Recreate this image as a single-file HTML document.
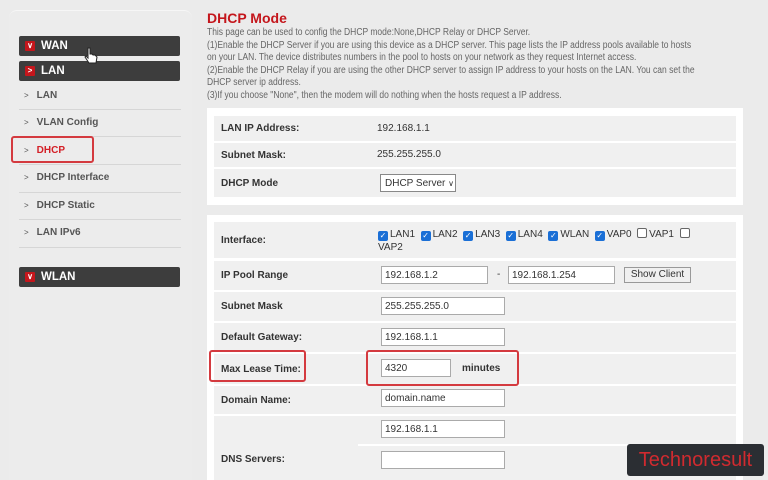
<!DOCTYPE html>
<html><head><style>
*{margin:0;padding:0;box-sizing:border-box}
body{width:768px;height:480px;overflow:hidden;background:#ebebeb;font-family:"Liberation Sans",Arial,sans-serif;position:relative;color:#333}
.a{position:absolute}
.bar{position:absolute;left:19px;width:161px;height:20px;background:#3d3d3d;border-radius:2px;color:#fff;font-weight:bold;font-size:11.5px;line-height:20px;padding-left:22px}
.bar i{position:absolute;left:6px;top:5px;width:10px;height:10px;background:#c4161c;border-radius:1px;color:#fff;font-style:normal;font-size:8px;line-height:10px;text-align:center}
.it{position:absolute;left:24px;font-size:10px;color:#555;font-weight:bold}
.it b{font-weight:normal;margin-right:8px;font-size:8px}
.hr{position:absolute;left:19px;width:162px;height:1px;background:#d6d6d6}
.desc{position:absolute;left:207px;top:27px;width:640px;font-size:10px;line-height:12.6px;color:#666;white-space:nowrap;transform:scaleX(0.85);transform-origin:0 0}
.panel{position:absolute;left:207px;width:536px;background:#fff}
.row{position:absolute;left:7px;width:522px;background:#f0f0f0}
.lab{position:absolute;left:0;top:0;bottom:0;width:142px;font-size:10px;font-weight:bold;color:#333;padding-left:7px;display:flex;align-items:center}
.val{position:absolute;left:144px;right:0;top:0;bottom:0;font-size:10px;color:#333}
.inp{position:absolute;height:18px;background:#fff;border:1px solid #aaa;font-size:10px;line-height:17px;padding-left:3px;color:#333;white-space:nowrap}
.cb{display:inline-block;width:10px;height:10px;border-radius:2px;background:#1a6fd6;vertical-align:-1px;margin-right:2px;color:#fff;font-size:8px;line-height:10px;text-align:center}
.cb.u{background:#fff;border:1px solid #666}
.red{position:absolute;border:2.5px solid #d43a3f;border-radius:3px}
</style></head><body>
<div class="a" style="left:9px;top:10px;width:183px;height:470px;background:#ececec;border-radius:8px 8px 0 0;border-top:1px solid #f6f6f6"></div>
<div class="bar" style="top:36px"><i>&#x2228;</i>WAN</div>
<div class="bar" style="top:61px"><i>&gt;</i>LAN</div>
<div class="it" style="top:90px"><b>&gt;</b>LAN</div><div class="hr" style="top:109px"></div>
<div class="it" style="top:117px"><b>&gt;</b>VLAN Config</div><div class="hr" style="top:136px"></div>
<div class="it" style="top:145px;color:#d42027"><b style="color:#555">&gt;</b>DHCP</div><div class="hr" style="top:164px"></div>
<div class="it" style="top:172px"><b>&gt;</b>DHCP Interface</div><div class="hr" style="top:192px"></div>
<div class="it" style="top:200px"><b>&gt;</b>DHCP Static</div><div class="hr" style="top:219px"></div>
<div class="it" style="top:227px"><b>&gt;</b>LAN IPv6</div><div class="hr" style="top:247px"></div>
<div class="bar" style="top:267px"><i>&#x2228;</i>WLAN</div>
<div class="red" style="left:11px;top:136px;width:83px;height:27px"></div>
<svg class="a" style="left:84px;top:47px" width="14" height="18" viewBox="0 0 14 18"><path d="M4 1v10l-2-2-1 1 4 6h7l1-6-2-2-2 0-1-1-2 0V1z" fill="#fff" stroke="#222" stroke-width="1"/></svg>

<div class="a" style="left:207px;top:10px;font-size:14px;font-weight:bold;color:#c4161c">DHCP Mode</div>
<div class="desc">This page can be used to config the DHCP mode:None,DHCP Relay or DHCP Server.<br>(1)Enable the DHCP Server if you are using this device as a DHCP server. This page lists the IP address pools available to hosts<br>on your LAN. The device distributes numbers in the pool to hosts on your network as they request Internet access.<br>(2)Enable the DHCP Relay if you are using the other DHCP server to assign IP address to your hosts on the LAN. You can set the<br>DHCP server ip address.<br>(3)If you choose "None", then the modem will do nothing when the hosts request a IP address.</div>

<div class="panel" style="top:108px;height:97px">
<div class="row" style="top:8px;height:25px"><div class="lab">LAN IP Address:</div><div class="val" style="padding:7px 0 0 19px">192.168.1.1</div></div>
<div class="row" style="top:35px;height:24px"><div class="lab">Subnet Mask:</div><div class="val" style="padding:6px 0 0 19px">255.255.255.0</div></div>
<div class="row" style="top:61px;height:28px"><div class="lab">DHCP Mode</div><div class="val"><div class="inp" style="left:22px;top:5px;width:76px;background:#fff;border-color:#888;padding-left:4px">DHCP Server <span style="font-size:8px">&#x2228;</span></div></div></div>
</div>

<div class="panel" style="top:215px;height:265px">
<div class="row" style="top:7px;height:36px"><div class="lab">Interface:</div><div class="val" style="padding:6px 0 0 20px;line-height:13px"><span class="cb">&#10003;</span>LAN1 &nbsp;<span class="cb">&#10003;</span>LAN2 &nbsp;<span class="cb">&#10003;</span>LAN3 &nbsp;<span class="cb">&#10003;</span>LAN4 &nbsp;<span class="cb">&#10003;</span>WLAN &nbsp;<span class="cb">&#10003;</span>VAP0 &nbsp;<span class="cb u"></span>VAP1 &nbsp;<span class="cb u"></span><br>VAP2</div></div>
<div class="row" style="top:46px;height:29px"><div class="lab">IP Pool Range</div><div class="val"><div class="inp" style="left:23px;top:5px;width:107px">192.168.1.2</div><span class="a" style="left:139px;top:8px">-</span><div class="inp" style="left:150px;top:5px;width:107px">192.168.1.254</div><div class="inp" style="left:266px;top:6px;width:67px;height:16px;background:#f0f0f0;border-color:#999;line-height:14px;text-align:center;padding:0">Show Client</div></div></div>
<div class="row" style="top:77px;height:29px"><div class="lab">Subnet Mask</div><div class="val"><div class="inp" style="left:23px;top:5px;width:124px">255.255.255.0</div></div></div>
<div class="row" style="top:108px;height:29px"><div class="lab">Default Gateway:</div><div class="val"><div class="inp" style="left:23px;top:5px;width:124px">192.168.1.1</div></div></div>
<div class="row" style="top:139px;height:30px"><div class="lab">Max Lease Time:</div><div class="val"><div class="inp" style="left:23px;top:5px;width:70px">4320</div><span class="a" style="left:104px;top:9px;font-weight:bold">minutes</span></div></div>
<div class="row" style="top:171px;height:28px"><div class="lab">Domain Name:</div><div class="val"><div class="inp" style="left:23px;top:3px;width:124px">domain.name</div></div></div>
<div class="row" style="top:201px;height:64px"><div class="lab" style="padding-top:22px">DNS Servers:</div><div class="val" style="background:#fff"><div class="a" style="left:0;right:0;top:0;height:28px;background:#f0f0f0"></div><div class="a" style="left:0;right:0;top:30px;height:34px;background:#f0f0f0"></div><div class="inp" style="left:23px;top:4px;width:124px">192.168.1.1</div><div class="inp" style="left:23px;top:35px;width:124px"></div></div></div>
</div>

<div class="red" style="left:209px;top:350px;width:97px;height:32px"></div>
<div class="red" style="left:366px;top:350px;width:153px;height:36px"></div>
<div class="a" style="left:627px;top:444px;width:137px;height:32px;background:#2b2e33;border-radius:3px;color:#d02a2f;font-size:20px;line-height:32px;text-align:center">Technoresult</div>
</body></html>
